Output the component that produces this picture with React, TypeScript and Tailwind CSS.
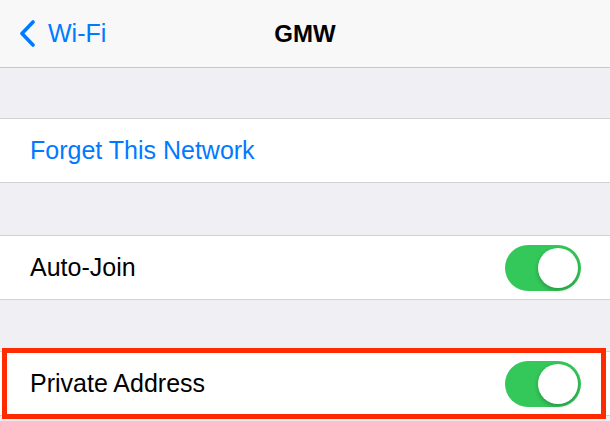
import React from 'react';

const font = { fontFamily: '"Liberation Sans", Arial, sans-serif' };

function Toggle() {
  return (
    <div className="w-[76px] h-[46px] rounded-full bg-[#34c759] p-[3px] flex items-center justify-end">
      <div className="w-[40px] h-[40px] rounded-full bg-white shadow-[0_2px_4px_rgba(0,0,0,0.25)]" />
    </div>
  );
}

function Row({ children }: { children: React.ReactNode }) {
  return (
    <div className="h-[65px] bg-white border-y border-[#d1d1d6] flex items-center justify-between pl-[30px] pr-[29px]">
      {children}
    </div>
  );
}

export default function App() {
  return (
    <div className="w-[610px] h-[421px] overflow-hidden bg-[#efeff4] relative" style={font}>
      {/* Navigation */}
      <div className="h-[68px] bg-[#f8f8f8] border-b border-[#c8c7cc] relative flex items-center">
        <div className="flex items-center pl-[18px] text-[#007aff]">
          <svg width="18" height="27" viewBox="0 0 18 27" className="mr-[12px]">
            <path d="M15 2 L4 13.5 L15 25" fill="none" stroke="#007aff" strokeWidth="3.6" strokeLinecap="round" strokeLinejoin="round" />
          </svg>
          <span className="text-[25px] leading-none">Wi-Fi</span>
        </div>
        <span className="absolute left-0 right-0 text-center text-[24px] font-bold text-black leading-none pointer-events-none">GMW</span>
      </div>

      <div className="h-[50px]" />
      <Row>
        <span className="text-[25px] text-[#007aff] leading-none">Forget This Network</span>
      </Row>

      <div className="h-[52px]" />
      <Row>
        <span className="text-[25px] text-black leading-none">Auto-Join</span>
        <Toggle />
      </Row>

      <div className="h-[51px]" />
      <Row>
        <span className="text-[25px] text-black leading-none">Private Address</span>
        <Toggle />
      </Row>

      {/* highlight annotation */}
      <div className="absolute left-[2px] top-[348px] w-[604px] h-[71px] border-[5px] border-[#ff2a00] pointer-events-none" />
    </div>
  );
}
